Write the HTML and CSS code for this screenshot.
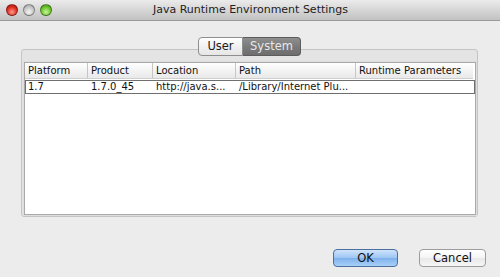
FILE: index.html
```html
<!DOCTYPE html>
<html>
<head>
<meta charset="utf-8">
<link rel="stylesheet" href="styles.css">
</head>
<body>
<div class="window">
  <div class="titlebar">
    <div class="lights">
      <span class="light red"></span>
      <span class="light gray"></span>
      <span class="light green"></span>
    </div>
    <div class="title">Java Runtime Environment Settings</div>
  </div>
  <div class="body">
    <div class="tabs">
      <div class="tab">User</div>
      <div class="tab selected">System</div>
    </div>
    <div class="panel">
      <div class="table">
        <div class="row head">
          <div class="c c1">Platform</div>
          <div class="c c2">Product</div>
          <div class="c c3">Location</div>
          <div class="c c4">Path</div>
          <div class="c c5">Runtime Parameters</div>
        </div>
        <div class="row data">
          <div class="c c1">1.7</div>
          <div class="c c2">1.7.0_45</div>
          <div class="c c3">http://java.s...</div>
          <div class="c c4">/Library/Internet Plu...</div>
          <div class="c c5"></div>
        </div>
      </div>
    </div>
    <div class="buttons">
      <div class="btn ok">OK</div>
      <div class="btn cancel">Cancel</div>
    </div>
  </div>
</div>
</body>
</html>
```

FILE: styles.css
```css
html, body {
  margin: 0;
  padding: 0;
}
body {
  width: 500px;
  height: 277px;
  overflow: hidden;
  background: #ececec;
  font-family: "DejaVu Sans", "Liberation Sans", sans-serif;
  color: #111;
}
.window {
  width: 500px;
  height: 277px;
  display: flex;
  flex-direction: column;
}
.titlebar {
  flex: none;
  display: flex;
  align-items: center;
  position: relative;
  background: linear-gradient(#ebebeb, #d2d2d2 60%, #c2c2c2);
  border-bottom: 1px solid #9a9a9a;
  box-sizing: border-box;
  height: 21px;
}
.lights {
  display: flex;
  gap: 5px;
  padding-left: 6px;
  z-index: 1;
}
.light {
  width: 12px;
  height: 12px;
  border-radius: 50%;
  box-sizing: border-box;
  border: 1px solid rgba(0,0,0,0.35);
}
.red { background: radial-gradient(circle at 50% 70%, #ff9a90, #e0301f 55%, #a01010); }
.gray { background: radial-gradient(circle at 50% 70%, #f4f4f4, #c8c8c8 55%, #9c9c9c); }
.green { background: radial-gradient(circle at 50% 70%, #c9f59a, #6cc62e 55%, #3b8a14); }
.title {
  position: absolute;
  left: 0;
  right: 0;
  text-align: center;
  font-size: 11px;
  color: #222;
  top: 3px;
  padding-left: 1px;
}
.body {
  flex: 1;
  display: flex;
  flex-direction: column;
}
.tabs {
  margin-top: 16px;
  display: flex;
  justify-content: center;
  margin-left: -1px;
  position: relative;
  z-index: 2;
  height: 19px;
}
.tab {
  height: 19px;
  box-sizing: border-box;
  border: 1px solid #8e8e8e;
  background: linear-gradient(#ffffff, #f1f1f1 50%, #e6e6e6);
  font-size: 11.5px;
  line-height: 17px;
  color: #1a1a1a;
}
.tab:first-child {
  border-radius: 4px 0 0 4px;
  width: 45px;
  text-align: center;
}
.tab.selected {
  border-radius: 0 4px 4px 0;
  background: linear-gradient(#8e8e8e, #7a7a7a 50%, #6e6e6e);
  color: #e8e8e8;
  border-color: #5c5c5c;
  border-left: none;
  width: 58px;
  text-align: center;
}
.panel {
  margin: -7px 22px 0 21px;
  height: 168px;
  box-sizing: border-box;
  border: 1px solid #c4c4c4;
  border-radius: 3px;
  background: #e4e4e4;
  padding: 12px 1px 1px 2px;
  display: flex;
}
.table {
  flex: 1;
  background: #fff;
  border: 1px solid #a9a9a9;
  box-shadow: 0 0 0 1px #dedede;
  font-size: 10px;
}
.row {
  display: flex;
}
.head {
  height: 15px;
  background: linear-gradient(#ffffff, #f3f3f3 50%, #e9e9e9);
  border-bottom: 1px solid #cfcfcf;
  line-height: 15px;
  margin-right: 2px;
}
.head .c {
  border-right: 1px solid #c6c6c6;
  padding-left: 3px;
  overflow: hidden;
}
.head .c5 { border-right: none; }
.data {
  margin-top: 1px;
  height: 12px;
  line-height: 11px;
  border: 1px solid #6f6f6f;
}
.data .c { padding-left: 2px; overflow: visible; }
.c {
  box-sizing: border-box;
  white-space: nowrap;
}
.c1 { width: 63px; }
.c2 { width: 65px; }
.c3 { width: 83px; }
.c4 { width: 120px; }
.c5 { flex: 1; }
.buttons {
  margin-top: 32px;
  display: flex;
  justify-content: flex-end;
  gap: 21px;
  padding-right: 14px;
}
.btn {
  height: 18px;
  box-sizing: border-box;
  border-radius: 4px;
  font-size: 11.5px;
  line-height: 16px;
  text-align: center;
}
.ok {
  width: 65px;
  border: 1px solid #4d6f9e;
  background: linear-gradient(#cfe3fb, #9cc5f3 50%, #7eb1ec 51%, #a8d0f8);
}
.cancel {
  width: 67px;
  border: 1px solid #9c9c9c;
  background: linear-gradient(#ffffff, #f4f4f4 50%, #e8e8e8 51%, #f6f6f6);
}
```
